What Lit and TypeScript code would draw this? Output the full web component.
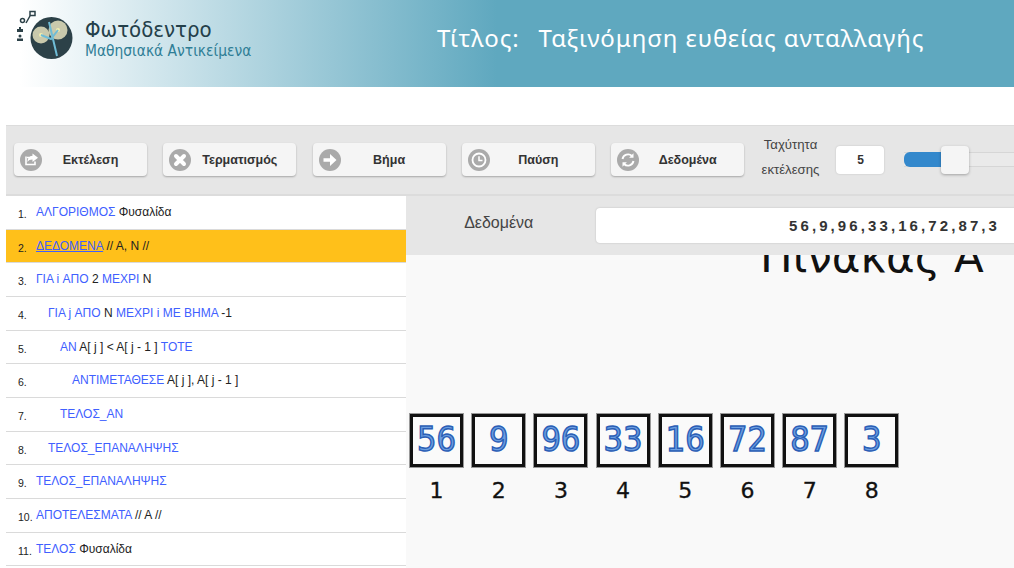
import { LitElement, html, css, svg } from "lit";
import { customElement } from "lit/decorators.js";

type Seg = [string, boolean];
const K = true, T = false;
const rows: { indent: number; segs: Seg[]; active?: boolean }[] = [
  { indent: 0, segs: [["ΑΛΓΟΡΙΘΜΟΣ", K], [" Φυσαλίδα", T]] },
  { indent: 0, active: true, segs: [["ΔΕΔΟΜΕΝΑ", K], [" // Α, Ν //", T]] },
  { indent: 0, segs: [["ΓΙΑ i ΑΠΟ", K], [" 2 ", T], ["ΜΕΧΡΙ", K], [" Ν", T]] },
  { indent: 12, segs: [["ΓΙΑ j ΑΠΟ", K], [" Ν ", T], ["ΜΕΧΡΙ i ΜΕ ΒΗΜΑ", K], [" -1", T]] },
  { indent: 24, segs: [["ΑΝ", K], [" Α[ j ] < Α[ j - 1 ] ", T], ["ΤΟΤΕ", K]] },
  { indent: 36, segs: [["ΑΝΤΙΜΕΤΑΘΕΣΕ", K], [" Α[ j ], Α[ j - 1 ]", T]] },
  { indent: 24, segs: [["ΤΕΛΟΣ_ΑΝ", K]] },
  { indent: 12, segs: [["ΤΕΛΟΣ_ΕΠΑΝΑΛΗΨΗΣ", K]] },
  { indent: 0, segs: [["ΤΕΛΟΣ_ΕΠΑΝΑΛΗΨΗΣ", K]] },
  { indent: 0, segs: [["ΑΠΟΤΕΛΕΣΜΑΤΑ", K], [" // Α //", T]] },
  { indent: 0, segs: [["ΤΕΛΟΣ", K], [" Φυσαλίδα", T]] },
];

const icons = {
  run: svg`<path d="M7 8.500h4.500M6 7.500v8h9v-3" fill="none" stroke="#fff" stroke-width="1.600"/><path d="M12.500 4.500l5.500 4.300-5.500 4.200v-2.500c-2.500 0-4 .8-5 2.500 0-3.500 1.800-6 5-6.200z" fill="#fff"/>`,
  stop: svg`<path d="M7 7l8 8M15 7l-8 8" stroke="#fff" stroke-width="4" stroke-linecap="round"/>`,
  step: svg`<path d="M4.500 9.300h6.500V5l6.500 6-6.500 6v-4.300H4.500z" fill="#fff"/>`,
  pause: svg`<circle cx="11" cy="11" r="6.500" fill="none" stroke="#fff" stroke-width="1.800"/><path d="M11 7.200V11.500H14.500" fill="none" stroke="#fff" stroke-width="1.500"/>`,
  data: svg`<path d="M5.500 10a5.700 5.700 0 0 1 9.500-3" fill="none" stroke="#fff" stroke-width="1.900"/><path d="M16.500 4.300v4.400h-4.400z" fill="#fff"/><path d="M16.500 12a5.700 5.700 0 0 1-9.500 3" fill="none" stroke="#fff" stroke-width="1.900"/><path d="M5.500 17.700v-4.400h4.400z" fill="#fff"/>`,
};

const buttons: [string, keyof typeof icons][] = [
  ["Εκτέλεση", "run"],
  ["Τερματισμός", "stop"],
  ["Βήμα", "step"],
  ["Παύση", "pause"],
  ["Δεδομένα", "data"],
];

const values = [56, 9, 96, 33, 16, 72, 87, 3];

@customElement("app-root")
export class AppRoot extends LitElement {
  static styles = css`
    :host { display: block; width: 1014px; height: 568px; overflow: hidden; background: #fff; font-family: "Liberation Sans", Arial, sans-serif; }
    .header { height: 87px; display: flex; align-items: flex-start; background: linear-gradient(90deg, #fff 2%, #5fa8bf 49%); }
    .logo { width: 60px; height: 60px; margin: 5px 0 0 14px; flex: none; }
    .brand { margin: 17px 0 0 11px; width: 352px; font-family: "DejaVu Sans", sans-serif; font-stretch: condensed; flex: none; }
    .brand-1 { font-size: 22px; line-height: 26px; color: #24404a; }
    .brand-2 { font-size: 15.4px; line-height: 17px; color: #2f7e96; }
    .title { margin-top: 21px; font-family: "Noto Sans", sans-serif; font-size: 24px; line-height: 34px; letter-spacing: .9px; color: #fff; white-space: pre; }
    .title b { font-weight: 400; margin-right: 19px; }
    .gap { height: 38px; }
    .main { margin-left: 6px; width: 1008px; }
    .toolbar { height: 68px; background: #e6e6e6; border-top: 1px solid #dcdcdc; border-bottom: 2px solid #dcdcdc; display: flex; align-items: flex-start; padding-left: 8px; overflow: hidden; }
    .btn { width: 133px; height: 33px; margin-top: 17px; margin-right: 16.3px; flex: none; border-radius: 4px; background: #f5f5f5; box-shadow: 0 1px 2px rgba(0,0,0,.28); display: flex; align-items: center; padding-left: 6px; box-sizing: border-box; font-size: 12.5px; font-weight: bold; color: #333; }
    .btn svg { width: 22px; height: 22px; flex: none; }
    .btn span { flex: 1; text-align: center; padding-right: 8px; }
    .speed { width: 76px; margin-left: -8px; flex: none; text-align: center; color: #444; font-size: 13.2px; line-height: 25px; margin-top: 6px; }
    .num { width: 48px; height: 28px; margin: 20px 0 0 8px; flex: none; background: #fff; border-radius: 4px; box-shadow: 0 0 2px rgba(0,0,0,.18); display: flex; align-items: center; justify-content: center; font-size: 12px; font-weight: bold; color: #333; }
    .slider { position: relative; width: 125px; margin: 20px 0 0 20px; height: 28px; flex: none; }
    .track { margin-top: 6px; height: 15px; box-sizing: border-box; border-top: 1px solid #d6d6d6; border-bottom: 1px solid #d6d6d6; background: #eaeaea; }
    .fill { position: absolute; left: 0; top: 6px; width: 42px; height: 15px; background: #3388cc; border-radius: 6px 0 0 6px; }
    .thumb { position: absolute; left: 37px; top: 0; width: 28px; height: 28px; border-radius: 4px; background: #f5f5f5; box-shadow: 0 1px 3px rgba(0,0,0,.3); }
    .body { display: flex; height: 372px; }
    .list { width: 400px; flex: none; background: #fff; }
    .row { height: 33.68px; box-sizing: border-box; border-bottom: 1px solid #dadada; display: flex; align-items: center; font-size: 12px; color: #222; padding: 0 0 .8px 12px; white-space: pre; }
    .row.active { background: #ffc01a; }
    .row.active .kw { text-decoration: underline; }
    .n { width: 18px; flex: none; font-size: 10.5px; padding-top: 4px; }
    .kw { color: #4060ff; }
    .panel { flex: 1; min-width: 0; background: #f9f9f9; display: flex; flex-direction: column; overflow: hidden; }
    .data { height: 59px; flex: none; background: #e6e6e6; display: flex; align-items: flex-start; }
    .data label { width: 189.500px; text-align: center; font-size: 16px; color: #444; margin-top: 18px; flex: none; line-height: 18px; padding-right: 4px; box-sizing: border-box; }
    .field { width: 430px; height: 35px; margin-top: 12px; flex: none; box-sizing: border-box; background: #fff; border-radius: 4px; box-shadow: 0 0 2px rgba(0,0,0,.2); font-size: 15px; line-height: 35px; font-weight: bold; letter-spacing: 3.1px; color: #333; padding-left: 193.500px; white-space: nowrap; }
    .canvas { flex: 1; min-height: 0; overflow: hidden; }
    .h { font-family: "DejaVu Sans", sans-serif; font-size: 43.5px; line-height: 6px; margin: -1px 0 0 354px; color: #111; white-space: nowrap; }
    .cells { display: flex; gap: 7.2px; margin: 152.700px 0 0 3px; }
    .cell { width: 55px; flex: none; text-align: center; font-family: "DejaVu Sans", sans-serif; }
    .box { width: 55px; height: 55px; box-sizing: border-box; border: 4px solid #111; outline: 1px solid #999; outline-offset: -1px; background: #fafafa; display: flex; align-items: center; justify-content: center; font-size: 34px; font-stretch: condensed; color: #6c9ee0; -webkit-text-stroke: 1.4px #2a5eb6; padding-bottom: 3px; }
    .idx { font-size: 22px; line-height: 24px; margin-top: 11px; color: #111; -webkit-text-stroke: .3px #111; }
  `;

  private logo() {
    return html`<svg class="logo" viewBox="0 0 60 60">
      <circle cx="37.500" cy="33" r="21" fill="#2c4148"/>
      <circle cx="27" cy="30" r="8.500" fill="#c9c9ac"/>
      <circle cx="44" cy="25" r="9.500" fill="#c9c9ac"/>
      <circle cx="27" cy="30" r="2" fill="#f2eeb0"/>
      <circle cx="44" cy="25" r="2" fill="#f2eeb0"/>
      <path d="M35 17l8 34M27 30l10 4 7-9" stroke="#6fbcd6" stroke-width="2" fill="none"/>
      <rect x="16" y="6.500" width="5" height="4" fill="none" stroke="#2c4148" stroke-width="1.500"/>
      <path d="M16 11l-4 7" stroke="#2c4148" stroke-width="1.500"/>
      <circle cx="8.500" cy="15.500" r="2" fill="none" stroke="#2c4148" stroke-width="1.500"/>
      <path d="M3 27v-3h2v-2h2v2h2v3z" fill="#2c4148"/>
      <circle cx="6" cy="31" r="1.500" fill="#2c4148"/>
      <path d="M3 36v-2.500h6V36z" fill="#2c4148"/>
    </svg>`;
  }

  render() {
    return html`
      <div class="header">
        ${this.logo()}
        <div class="brand">
          <div class="brand-1">Φωτόδεντρο</div>
          <div class="brand-2">Μαθησιακά Αντικείμενα</div>
        </div>
        <div class="title"><b>Τίτλος:</b>Ταξινόμηση ευθείας ανταλλαγής</div>
      </div>
      <div class="gap"></div>
      <div class="main">
        <div class="toolbar">
          ${buttons.map(([t, ic]) => html`<div class="btn">
            <svg viewBox="0 0 22 22"><circle cx="11" cy="11" r="11" fill="#aaa"/>${icons[ic]}</svg>
            <span>${t}</span>
          </div>`)}
          <div class="speed">Ταχύτητα<br />εκτέλεσης</div>
          <div class="num">5</div>
          <div class="slider">
            <div class="track"></div>
            <div class="fill"></div>
            <div class="thumb"></div>
          </div>
        </div>
        <div class="body">
          <div class="list">
            ${rows.map((r, i) => html`<div class="row ${r.active ? "active" : ""}">
              <span class="n">${i + 1}.</span>
              <span style="margin-left:${r.indent}px">${r.segs.map(([s, k]) => (k ? html`<span class="kw">${s}</span>` : s))}</span>
            </div>`)}
          </div>
          <div class="panel">
            <div class="data">
              <label>Δεδομένα</label>
              <div class="field">56,9,96,33,16,72,87,3</div>
            </div>
            <div class="canvas">
              <div class="h">Πίνακας Α</div>
              <div class="cells">
                ${values.map((v, i) => html`<div class="cell"><div class="box">${v}</div><div class="idx">${i + 1}</div></div>`)}
              </div>
            </div>
          </div>
        </div>
      </div>
    `;
  }
}
